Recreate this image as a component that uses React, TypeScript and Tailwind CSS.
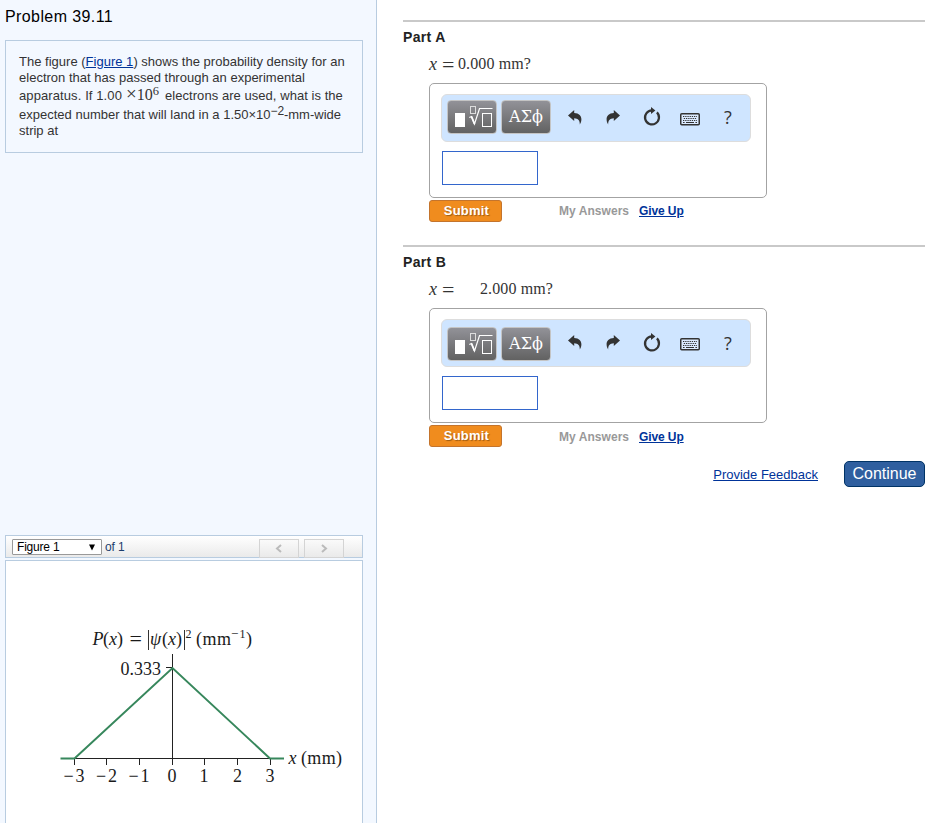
import { useState } from 'react';

const UndoIcon = ({ flip }: { flip?: boolean }) => (
  <svg width="14" height="15" viewBox="0 0 14 15" className={flip ? '-scale-x-100' : ''}>
    <path d="M0 5.5 L6.2 0 V3 C11 3.2 13.6 6 13.4 9.6 C13.3 11.6 12.8 13 11.8 14.6 C12 10.4 10.2 8.4 6.2 8.2 V11 Z" fill="#333" />
  </svg>
);

const ResetIcon = () => (
  <svg width="18" height="20" viewBox="0 0 18 20">
    <path d="M13.9 5.4 A7 7 0 1 1 8.8 3.4" fill="none" stroke="#333" strokeWidth="2.2" />
    <path d="M8 0 L12.4 3.4 L8 7 Z" fill="#333" />
  </svg>
);

const KeyboardIcon = () => (
  <svg width="20" height="13" viewBox="0 0 20 13">
    <rect x="0.75" y="0.75" width="18.5" height="11" rx="1" fill="#dbeaff" stroke="#333" strokeWidth="1.5" />
    <path d="M3 3.5 H17 M3.8 5.5 H17 M3 7.5 H17" stroke="#333" strokeWidth="1.1" strokeDasharray="1.3 0.9" />
    <path d="M3 9.5 H4.6 M6 9.5 H14 M15.4 9.5 H17" stroke="#333" strokeWidth="1.1" />
  </svg>
);

const TemplateIcon = () => (
  <svg width="38" height="22" viewBox="0 0 38 22">
    <rect x="0" y="7" width="10" height="14" fill="#fff" />
    <rect x="15.5" y="0.5" width="5" height="7" fill="none" stroke="#ddd" />
    <path d="M14.3 11.5 L16.5 10.5 L19.5 18 L24.5 2.5 H37.5" fill="none" stroke="#fff" strokeWidth="1.2" />
    <path d="M16.5 10.5 L19.5 18" stroke="#fff" strokeWidth="1.8" />
    <rect x="27.5" y="7.5" width="9" height="13" fill="none" stroke="#fff" />
  </svg>
);

const toolButton =
  'flex h-[34px] w-[50px] items-center justify-center rounded-[4px] border border-[#c4c4c4] bg-gradient-to-b from-[#929298] to-[#626262] text-white';

const Part = ({ label, value, wide }: { label: string; value: string; wide?: boolean }) => {
  const [answer, setAnswer] = useState('');

  return (
    <section className="h-[225px] border-t-2 border-[#c9c9c9]">
      <h2 className="mt-[7px] h-4 text-[14px] leading-4 font-bold tracking-[0.35px] text-[#222]">{label}</h2>
      <div className="pl-[26px]">
        <div className="mt-[9px] flex h-[20px] items-center whitespace-pre font-[Liberation_Serif,serif] text-[16px] text-[#333]">
          <span className="w-[10px] text-[18px] italic">x</span>
          <span className={wide ? 'mr-[25px] ml-[3px] w-[13px] text-[22px]' : 'mr-[3px] ml-[3px] w-[13px] text-[22px]'}>=</span>
          <span className="tracking-[0.12px]">{value} mm?</span>
        </div>
        <div className="mt-[9px] h-[115px] w-[338px] rounded-[5px] border border-[#a3a3a3] px-[11px] pt-[10px]">
          <div className={`flex h-12 w-[310px] items-center rounded-[6px] border border-[#ddd] bg-[#cfe5ff] pl-[5px] ${wide ? 'pt-0.5' : 'pb-0.5'}`}>
            <button className={`${toolButton} pl-[3px]`}><TemplateIcon /></button>
            <button className={`${toolButton} ml-1 font-[DejaVu_Serif,serif] text-[16px]`}>ΑΣϕ</button>
            <div className={`ml-[17px] flex items-center ${wide ? 'pb-[3px]' : ''}`}>
              <button className="w-[38px]"><UndoIcon /></button>
              <button className="w-[37px]"><UndoIcon flip /></button>
              <button className="w-[37px]"><ResetIcon /></button>
              <button className="w-[44px] pt-[4px]"><KeyboardIcon /></button>
              <button className="font-[Open_Sans,sans-serif] text-[18px] leading-5 text-[#333]">?</button>
            </div>
          </div>
          <input
            type="text"
            value={answer}
            onChange={(e) => setAnswer(e.target.value)}
            className="mt-[9px] ml-px block h-[34px] w-24 border border-[#3366cc] px-1 outline-none"
          />
        </div>
        <div className="mt-0.5 flex h-[22px] items-center text-[12px] font-bold">
          <button className="h-[22px] w-[73px] rounded-[3px] border border-[#c4742c] bg-[#f08c1e] pl-0.5 text-[13px] leading-5 tracking-[0.2px] text-white [text-shadow:1px_1px_1px_#9b5a12]">
            Submit
          </button>
          <span className={`ml-[57px] w-20 tracking-[0.05px] text-[#999] ${wide ? 'pt-0.5' : ''}`}>My Answers</span>
          <a href="#" className={`tracking-[-0.1px] text-[#003399] underline ${wide ? 'pt-0.5' : ''}`}>Give Up</a>
        </div>
      </div>
    </section>
  );
};

const ticks = [
  { x: 74, label: '−3', tx: 75 },
  { x: 106, label: '−2', tx: 107.5 },
  { x: 139, label: '−1', tx: 140 },
  { x: 172, label: '0', tx: 172 },
  { x: 204, label: '1', tx: 204 },
  { x: 237, label: '2', tx: 237.5 },
  { x: 270, label: '3', tx: 270 },
];

const DensityChart = () => (
  <svg width="356" height="262" viewBox="6 561 356 262" fontFamily="Liberation Serif, serif" fontSize="18" fill="#1a1a1a">
    <text x="92.5" y="645" fontStyle="italic">P</text>
    <text x="103" y="645">(<tspan fontStyle="italic">x</tspan>)</text>
    <text x="129.5" y="646" fontSize="22">=</text>
    <path d="M148.5 630 V650 M184.5 630 V650" stroke="#333" />
    <text x="150" y="645" fontStyle="italic">ψ</text>
    <text x="162" y="645">(<tspan fontStyle="italic">x</tspan>)</text>
    <text x="185.5" y="638" fontSize="12">2</text>
    <text x="196" y="645" textLength="35">(mm</text>
    <text x="231" y="638" fontSize="13">−</text>
    <text x="239.5" y="638" fontSize="12">1</text>
    <text x="246" y="645">)</text>
    <text x="120.5" y="675" textLength="40.5">0.333</text>
    <path d="M74 758.5 H270 M172.5 654 V765 M166 667.5 H172" fill="none" stroke="#222" />
    {ticks.map((t) => (
      <g key={t.x}>
        <path d={`M${t.x + 0.5} 758 V765`} stroke="#222" />
        <text x={t.tx} y="782" textAnchor="middle" letterSpacing={t.label.length > 1 ? 2 : 0}>{t.label}</text>
      </g>
    ))}
    <path d="M60.5 758.5 H74.5 L172.5 668 L270 758.5 H284" fill="none" stroke="#37875c" strokeWidth="2" />
    <text x="288.5" y="764" fontStyle="italic">x</text>
    <text x="301" y="764" textLength="41">(mm)</text>
  </svg>
);

const App = () => {
  return (
    <div className="flex h-[823px] w-[939px] overflow-hidden bg-white font-[Liberation_Sans,Arial,sans-serif]">
      <aside className="flex w-[377px] flex-col border-r border-[#b8cce0] bg-[#f3f8ff] pr-[13px] pl-[5px]">
        <h1 className="mt-[7px] h-5 text-[16px] leading-5 tracking-[0.4px] text-black">Problem 39.11</h1>
        <div className="mt-[13px] h-[113px] w-[358px] border border-[#b8cce0] pt-[13px] pl-[13px] text-[13px] leading-4 tracking-[0.01px] whitespace-nowrap text-[#333]">
          <p className="h-4">
            The figure (<a href="#" className="text-[#003399] underline">Figure 1</a>) shows the probability density for an
          </p>
          <p className="h-4">electron that has passed through an experimental</p>
          <p className="h-[18px] pt-[2px]">
            <span className="tracking-[0.1px]">apparatus. If 1.00</span>
            <span className="mr-[6px] ml-[4px] font-[Liberation_Serif,serif] text-[16px] leading-[0]">
              <span className="text-[19px] leading-[0]">×</span>10<sup className="top-[-5px] text-[12.5px]">6</sup>
            </span>
            <span className="tracking-[0.05px]">electrons are used, what is the</span>
          </p>
          <p className="h-[19px] pt-[3px]">
            expected number that will land in a 1.50×10<sup className="top-[-4px] text-[12px] tracking-[-0.2px]">−2</sup>-mm-wide
          </p>
          <p className="h-4">strip at</p>
        </div>

        <div className="mt-[382px] flex h-[23px] w-[358px] shrink-0 items-start border border-[#b8cce0] bg-gradient-to-b from-white to-[#eaeaea] pt-[3px] pl-[6px] text-[12px]">
          <button className="flex h-4 w-[90px] items-center justify-between rounded-[1px] border border-[#999] bg-white pr-[5px] pl-1 text-black">
            <span className="tracking-[-0.2px]">Figure 1</span>
            <svg width="8" height="7" viewBox="0 0 8 7"><path d="M1 0.5 H7 L4 6.5 Z" fill="#000" /></svg>
          </button>
          <span className="ml-[3px] leading-4 tracking-[-0.15px] text-[#1c3c6c]">of 1</span>
          <div className="ml-auto flex gap-[5px] pr-[18px]">
            {['M6 1 L2 4.5 L6 8', 'M2 1 L6 4.5 L2 8'].map((d) => (
              <button key={d} className="flex h-[19px] w-10 items-center justify-center border border-[#d4d4d4] bg-gradient-to-b from-[#fafafa] to-[#eaeaea]">
                <svg width="8" height="9" viewBox="0 0 8 9"><path d={d} fill="none" stroke="#bbb" strokeWidth="2" /></svg>
              </button>
            ))}
          </div>
        </div>
        <div className="mt-0.5 h-[263px] w-[358px] shrink-0 border border-b-0 border-[#b8cce0] bg-white">
          <DensityChart />
        </div>
      </aside>

      <main className="w-[548px] pt-5 pl-[26px]">
        <Part label="Part A" value="0.000" />
        <Part label="Part B" value="2.000" wide />
        <div className="-mt-[9px] flex items-center justify-end">
          <a href="#" className="pt-px text-[13px] text-[#003399] underline">Provide Feedback</a>
          <button className="ml-[26px] h-[26px] w-[81px] rounded-[5px] border border-[#003366] bg-[#2f5f9f] text-[16px] leading-none text-white">
            Continue
          </button>
        </div>
      </main>
    </div>
  );
};

export default App;
